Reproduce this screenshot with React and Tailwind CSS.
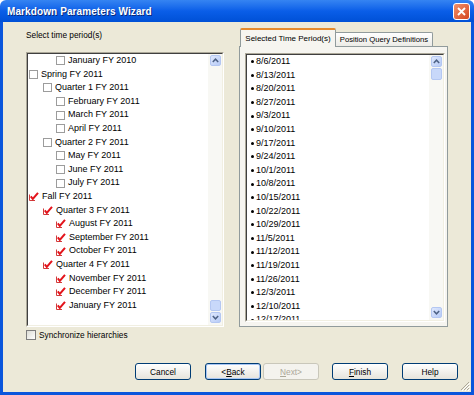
import React from 'react'

const tree = [
  { level: 2, text: 'January FY 2010', checked: false },
  { level: 0, text: 'Spring FY 2011', checked: false },
  { level: 1, text: 'Quarter 1 FY 2011', checked: false },
  { level: 2, text: 'February FY 2011', checked: false },
  { level: 2, text: 'March FY 2011', checked: false },
  { level: 2, text: 'April FY 2011', checked: false },
  { level: 1, text: 'Quarter 2 FY 2011', checked: false },
  { level: 2, text: 'May FY 2011', checked: false },
  { level: 2, text: 'June FY 2011', checked: false },
  { level: 2, text: 'July FY 2011', checked: false },
  { level: 0, text: 'Fall FY 2011', checked: true },
  { level: 1, text: 'Quarter 3 FY 2011', checked: true },
  { level: 2, text: 'August FY 2011', checked: true },
  { level: 2, text: 'September FY 2011', checked: true },
  { level: 2, text: 'October FY 2011', checked: true },
  { level: 1, text: 'Quarter 4 FY 2011', checked: true },
  { level: 2, text: 'November FY 2011', checked: true },
  { level: 2, text: 'December FY 2011', checked: true },
  { level: 2, text: 'January FY 2011', checked: true },
]

const dates = [
  '8/6/2011', '8/13/2011', '8/20/2011', '8/27/2011', '9/3/2011', '9/10/2011',
  '9/17/2011', '9/24/2011', '10/1/2011', '10/8/2011', '10/15/2011', '10/22/2011',
  '10/29/2011', '11/5/2011', '11/12/2011', '11/19/2011', '11/26/2011', '12/3/2011',
  '12/10/2011', '12/17/2011',
]

const indent = ['pl-[1px]', 'pl-[15px]', 'pl-[28px]']

function TreeBox({ checked }) {
  if (!checked) {
    return (
      <svg width="9" height="9" viewBox="0 0 9 9" className="shrink-0">
        <rect x="0.5" y="0.5" width="8" height="8" fill="#fff" stroke="#9c9c9c" />
      </svg>
    )
  }
  return (
    <svg width="10" height="9" viewBox="0 0 10 9" className="shrink-0">
      <path d="M0.5 2.5 V8.5 H6" fill="none" stroke="#d23a3a" strokeWidth="1" />
      <path d="M1.8 4.3 L3.8 7 L9 0.8" fill="none" stroke="#e3141c" strokeWidth="2" />
    </svg>
  )
}

function Arrow({ up }) {
  return (
    <div className="w-[11px] h-[11px] rounded-[2px] border border-[#b4c7f2] bg-gradient-to-br from-[#dfe8fd] to-[#b7cbf6] flex items-center justify-center">
      <svg width="7" height="5" viewBox="0 0 7 5">
        <path d={up ? 'M0.8 4 L3.5 1.2 L6.2 4' : 'M0.8 1 L3.5 3.8 L6.2 1'} fill="none" stroke="#4d6185" strokeWidth="1.5" />
      </svg>
    </div>
  )
}

function ScrollBar({ thumbAtTop }) {
  return (
    <div className="w-[14px] h-full shrink-0 bg-[#f8f8f4] flex flex-col items-center pt-px pb-[2px]">
      <Arrow up />
      {thumbAtTop && <div className="w-[11px] h-[12px] mt-px rounded-[2px] border border-[#b4c7f2] bg-[#c8d8fa]" />}
      <div className="flex-1" />
      {!thumbAtTop && <div className="w-[11px] h-[11px] mb-px rounded-[2px] border border-[#b4c7f2] bg-[#c8d8fa]" />}
      <Arrow />
    </div>
  )
}

function ListBox({ className, children, thumbAtTop }) {
  return (
    <div className={`border border-t-[#aca899] border-l-[#aca899] border-b-white border-r-white ${className}`}>
      <div className="h-full border border-t-[#3f3f3f] border-l-[#3f3f3f] border-b-[#f1efe2] border-r-[#f1efe2] bg-white flex">
        <div className="flex-1 overflow-hidden">{children}</div>
        <ScrollBar thumbAtTop={thumbAtTop} />
      </div>
    </div>
  )
}

function Button({ children, disabled, focused }) {
  return (
    <div
      className={`w-[56px] h-[17px] rounded-[3px] border flex items-center justify-center text-[8.3px] ${
        disabled
          ? 'border-[#c9c7ba] bg-[#f4f3ee] text-[#aca899]'
          : 'border-[#003c74] bg-gradient-to-b from-white to-[#e6e4dc] text-black'
      } ${focused ? 'shadow-[inset_0_0_0_1px_#a8c6f4]' : ''}`}
    >
      {children}
    </div>
  )
}

export default function App() {
  return (
    <div className="w-[474px] h-[395px] flex flex-col font-['Liberation_Sans',Arial,sans-serif] text-black select-none">
      {/* Title bar */}
      <div className="h-[22px] shrink-0 rounded-t-[6px] bg-gradient-to-b from-[#3584f2] via-[#0a5ee8] to-[#0050d6] flex items-center pl-[7px] pr-[4px]">
        <span className="text-white font-bold text-[10px] tracking-[0.1px] [text-shadow:1px_1px_0_#0a2a7a]">Markdown Parameters Wizard</span>
        <div className="ml-auto w-[17px] h-[17px] rounded-[3px] border border-white bg-gradient-to-br from-[#f0906a] to-[#d4431a] flex items-center justify-center">
          <svg width="9" height="9" viewBox="0 0 9 9">
            <path d="M1 1 L8 8 M8 1 L1 8" stroke="#fff" strokeWidth="1.8" />
          </svg>
        </div>
      </div>

      {/* Body */}
      <div className="flex-1 bg-[#ece9d8] border-x-[3px] border-b-[3px] border-[#0a56dc] flex flex-col relative">
        <div className="flex">
          {/* Left column */}
          <div className="ml-[23px] w-[198px]">
            <div className="h-[30px] pt-[8px] text-[8.3px] leading-[10px]">Select time period(s)</div>
            <ListBox className="h-[275px]">
              {tree.map((r, i) => (
                <div key={i} className={`h-[13.6px] flex items-center gap-[3px] text-[9px] ${indent[r.level]}`}>
                  <TreeBox checked={r.checked} />
                  <span className="whitespace-nowrap">{r.text}</span>
                </div>
              ))}
            </ListBox>
            <div className="mt-[2px] flex items-center gap-[3px]">
              <div className="w-[10px] h-[10px] border border-[#7d7d7d] bg-gradient-to-br from-[#dcdcd5] to-white" />
              <span className="text-[8.3px]">Synchronize hierarchies</span>
            </div>
          </div>

          {/* Right column */}
          <div className="ml-[15px] w-[209px] mt-[6px]">
            <div className="h-[18px] flex items-end pl-[1px]">
              <div className="relative z-10 h-[19px] w-[96px] -mb-px bg-[#f6f5f0] border-x border-[#919b9c] border-t-[2px] border-t-[#e68b2c] rounded-t-[2px] flex items-center justify-center text-[8px] whitespace-nowrap">
                Selected Time Period(s)
              </div>
              <div className="h-[14px] w-[97px] bg-gradient-to-b from-white to-[#ecebe6] border-t border-r border-[#919b9c] rounded-tr-[2px] flex items-center justify-center text-[7.7px] whitespace-nowrap">
                Position Query Definitions
              </div>
            </div>
            <div className="h-[281px] border border-[#919b9c] bg-[#f6f5f0] pl-[5px] pr-[2px] pt-[6px] pb-[4px]">
              <ListBox className="h-full" thumbAtTop>
                {dates.map((d) => (
                  <div key={d} className="h-[13.6px] flex items-center gap-[2px] pl-[4px] text-[9px]">
                    <span className="w-[3px] h-[3px] rounded-full bg-black" />
                    <span>{d}</span>
                  </div>
                ))}
              </ListBox>
            </div>
          </div>
        </div>

        {/* Buttons */}
        <div className="mt-[22px] flex pl-[132px]">
          <Button>Cancel</Button>
          <div className="ml-[14px]">
            <Button focused>
              &lt;<span className="underline">B</span>ack
            </Button>
          </div>
          <div className="ml-[2px]">
            <Button disabled>
              <span className="underline">N</span>ext&gt;
            </Button>
          </div>
          <div className="ml-[13px]">
            <Button>
              <span className="underline">F</span>inish
            </Button>
          </div>
          <div className="ml-[14px]">
            <Button>Help</Button>
          </div>
        </div>

        {/* Size grip */}
        <svg width="10" height="10" viewBox="0 0 10 10" className="absolute right-[1px] bottom-[1px]">
          <path d="M9 1 L1 9 M9 4 L4 9 M9 7 L7 9" stroke="#aca899" strokeWidth="1" />
          <path d="M10 2 L2 10 M10 5 L5 10 M10 8 L8 10" stroke="#fff" strokeWidth="1" />
        </svg>
      </div>
    </div>
  )
}
